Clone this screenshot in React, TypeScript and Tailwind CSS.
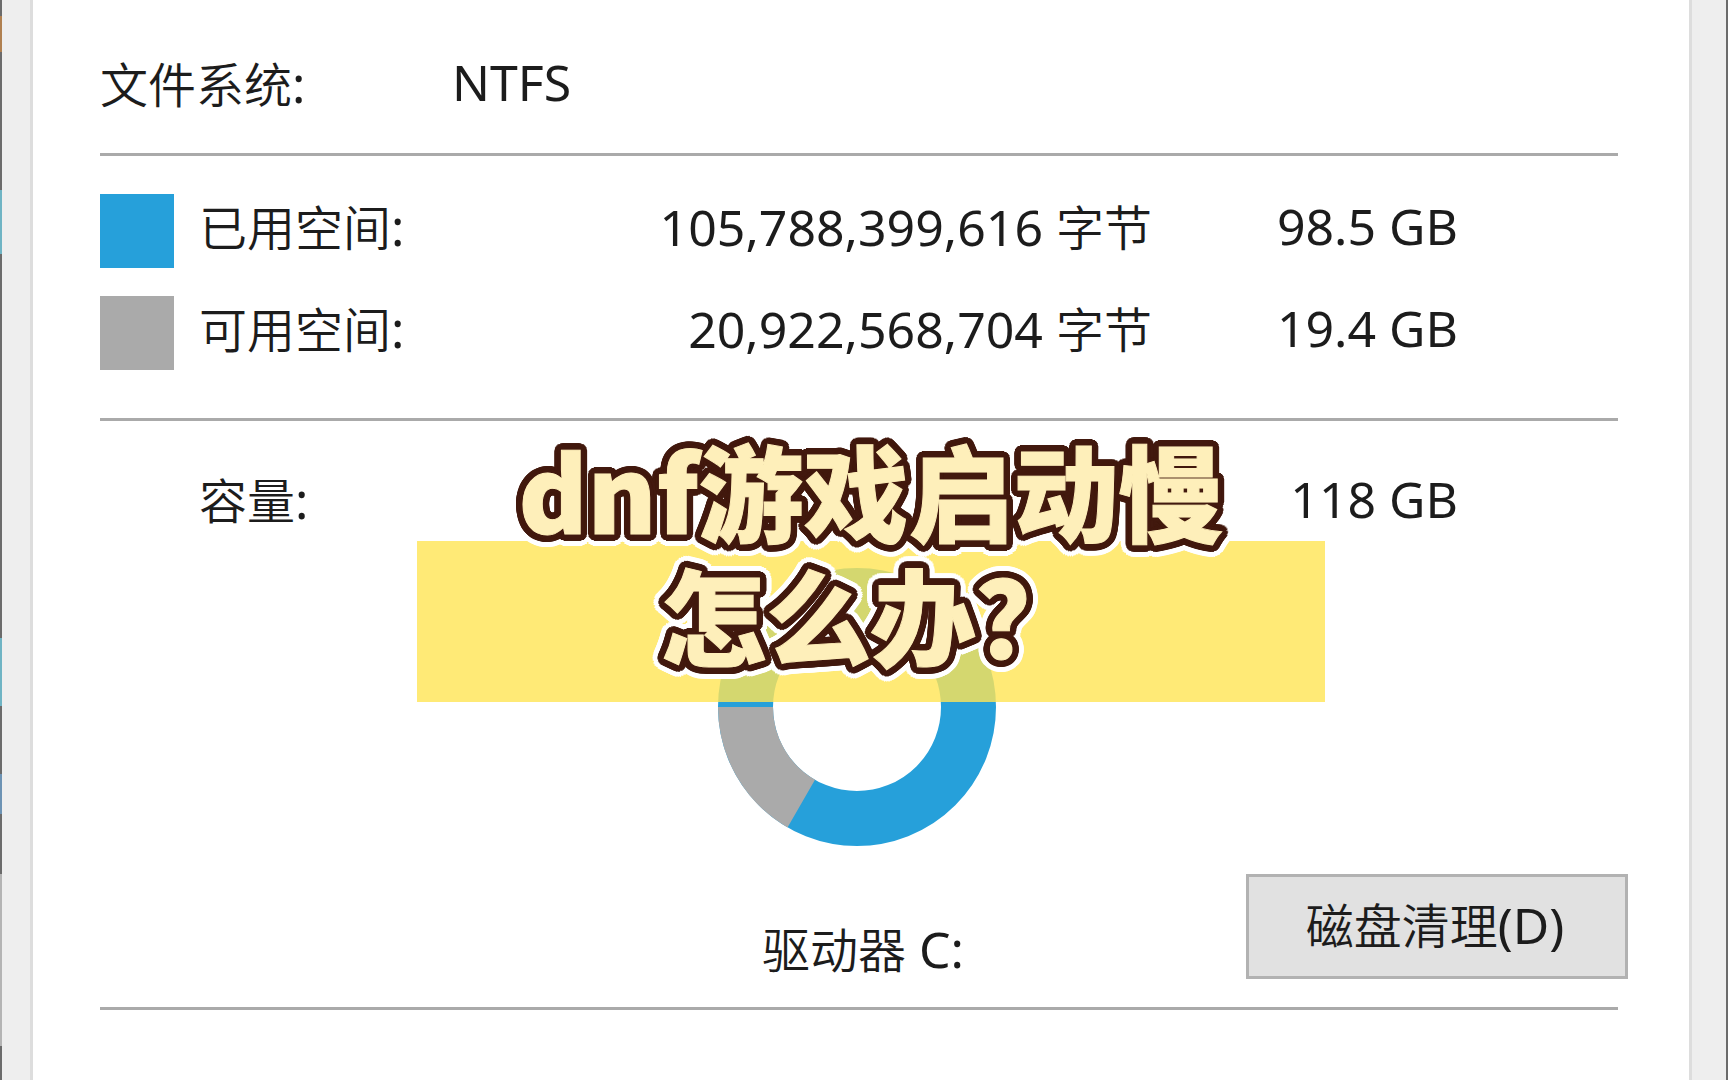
import clsx from "clsx";
import type { ReactNode } from "react";

type Usage = {
  label: string;
  bytes?: string;
  size: string;
  swatch?: string;
};

const usage: Usage[] = [
  { label: "已用空间", bytes: "105,788,399,616", size: "98.5 GB", swatch: "bg-[#26a0da]" },
  { label: "可用空间", bytes: "20,922,568,704", size: "19.4 GB", swatch: "bg-[#aaaaaa]" },
];

const capacity: Usage[] = [{ label: "容量", size: "118 GB" }];

// Round outline built from shadows placed on a circle
function ring(radius: number, color: string) {
  const steps = 32;
  return Array.from({ length: steps }, (_, i) => {
    const angle = (i / steps) * 2 * Math.PI;
    const x = (Math.cos(angle) * radius).toFixed(2);
    const y = (Math.sin(angle) * radius).toFixed(2);
    return `${x}px ${y}px 0 ${color}`;
  }).join(", ");
}

// Brown outline on top, white halo behind it
const titleOutline = [ring(4, "#42190e"), ring(7, "#42190e"), ring(12, "#ffffff")].join(", ");

// Chinese glyphs are set a little smaller than the latin ones
function Zh({ children }: { children: ReactNode }) {
  return (
    <span className="text-[48px] font-[350] font-['Noto_Sans_CJK_SC_DemiLight','Noto_Sans_CJK_SC',sans-serif]">
      {children}
    </span>
  );
}

function UsageTable({ rows }: { rows: Usage[] }) {
  return (
    <table className="w-full table-fixed">
      <tbody>
        {rows.map((row) => (
          <tr key={row.label} className="h-[102px]">
            <td className="w-[99px] p-0">
              {row.swatch && <div className={clsx("size-[74px]", row.swatch)} />}
            </td>
            <th scope="row" className="p-0 pb-2.5 text-left font-normal">
              <Zh>{row.label}</Zh>:
            </th>
            <td className="w-[600px] p-0 pb-2.5 text-right">
              {row.bytes && (
                <>
                  {row.bytes} <Zh>字节</Zh>
                </>
              )}
            </td>
            <td className="w-[466px] p-0 pr-40 pb-2.5 text-right">{row.size}</td>
          </tr>
        ))}
      </tbody>
    </table>
  );
}

function DriveChart() {
  return (
    <svg viewBox="0 0 280 280" className="size-[280px]" role="img" aria-label="C:">
      <circle cx="140" cy="140" r="111.5" fill="none" stroke="#26a0da" strokeWidth="55" />
      <path
        d="M28.5 140A111.5 111.5 0 0 0 84.25 236.56"
        fill="none"
        stroke="#aaaaaa"
        strokeWidth="55"
      />
    </svg>
  );
}

// Sliver of the desktop that shows past the left side of the window
function DesktopEdge() {
  return (
    <div className="flex w-0.5 flex-col bg-[#6b6b6b]">
      <div className="mt-4 h-9 bg-[#b08050]" />
      <div className="mt-[138px] h-16 bg-[#6fb4c4]" />
      <div className="mt-[384px] h-[68px] bg-[#6fb4c4]" />
      <div className="mt-[68px] h-10 bg-[#6d93b4]" />
      <div className="mt-[60px] h-[172px] bg-[#b4b4b4]" />
    </div>
  );
}

function Banner() {
  return (
    <div className="pointer-events-none absolute inset-x-0 top-[426px] flex justify-center pl-4">
      <div className="relative w-[908px] pb-7">
        <div className="absolute inset-x-0 bottom-0 h-[161px] bg-[#ffe554]/80" />
        <h1
          className="
            relative text-center text-[105px] leading-[124px] font-black text-[#feefba]
            font-['Noto_Sans_CJK_SC',sans-serif] [-webkit-text-stroke:1px_#feefba]
          "
          style={{ textShadow: titleOutline }}
        >
          dnf游戏启动慢
          <br />
          怎么办？
        </h1>
      </div>
    </div>
  );
}

export default function App() {
  return (
    <div className="relative flex min-h-screen border-r-2 border-[#6b6b6b] bg-[#eeeeee] font-['Noto_Sans','Noto_Sans_CJK_SC',sans-serif] text-[50px] leading-[60px] text-[#1c1c1c]">
      <DesktopEdge />
      <main className="mr-[34px] ml-7 flex-1 border-x-3 border-[#dddddd] bg-white pr-[61px] pl-[67px]">
        <dl className="flex h-[153px] pt-[52px]">
          <dt className="w-[352px]">
            <Zh>文件系统</Zh>:
          </dt>
          <dd>NTFS</dd>
        </dl>

        <section className="mr-2.5 border-t-3 border-[#aaaaaa] pt-6 pb-[34px]">
          <UsageTable rows={usage} />
        </section>

        <section className="mr-2.5 border-t-3 border-[#aaaaaa] pt-8">
          <UsageTable rows={capacity} />
        </section>

        <section className="grid grid-cols-[1fr_auto_1fr] items-end pt-3 pb-7">
          <figure className="col-start-2 flex flex-col items-center pr-3.5">
            <DriveChart />
            <figcaption className="pt-[70px] pl-3">
              <Zh>驱动器</Zh> C:
            </figcaption>
          </figure>
          <button
            type="button"
            className="h-[105px] w-[382px] justify-self-end border-3 border-[#b2b2b2] bg-[#e1e1e1] pr-1 pb-1.5"
          >
            <Zh>磁盘清理</Zh>(D)
          </button>
        </section>

        <hr className="mr-2.5 border-t-3 border-[#aaaaaa]" />
      </main>
      <Banner />
    </div>
  );
}
